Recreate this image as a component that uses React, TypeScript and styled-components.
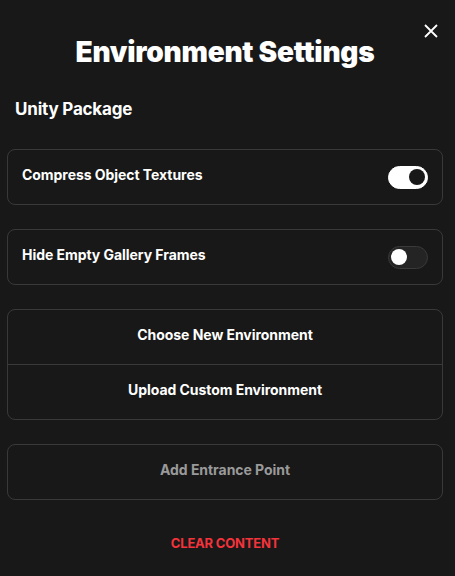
import { createGlobalStyle } from 'styled-components';
import styled from 'styled-components';

const GlobalStyle = createGlobalStyle`
  html, body {
    margin: 0;
    padding: 0;
    background: #181818;
  }

  body {
    font-family: Inter, "Noto Sans", sans-serif;
    color: #ffffff;
  }
`;

const Panel = styled.div`
  position: relative;
  width: 455px;
  min-height: 576px;
  box-sizing: border-box;
  padding: 35px 12px 0 7px;
  display: flex;
  flex-direction: column;
`;

const CloseButton = styled.button`
  position: absolute;
  top: 22px;
  right: 15px;
  width: 18px;
  height: 18px;
  padding: 0;
  border: none;
  background: transparent;
  display: flex;
  align-items: center;
  justify-content: center;
  cursor: pointer;
`;

const Title = styled.h1`
  margin: 0;
  text-align: center;
  font-size: 28px;
  line-height: 34px;
  font-weight: 900;
  letter-spacing: -0.25px;
`;

const SectionLabel = styled.h2`
  margin: 29px 0 29px 8px;
  font-size: 17px;
  line-height: 22px;
  font-weight: 700;
  letter-spacing: -0.2px;
`;

const Card = styled.div`
  border: 1px solid #393939;
  border-radius: 8px;
  display: flex;
  flex-direction: column;
  overflow: hidden;

  & + & {
    margin-top: 24px;
  }
`;

const Row = styled.div<{ $center?: boolean }>`
  height: 54px;
  box-sizing: border-box;
  padding: 0 14px;
  display: flex;
  align-items: center;
  justify-content: ${(p) => (p.$center ? 'center' : 'space-between')};

  & + & {
    border-top: 1px solid #393939;
    height: 55px;
  }
`;

const Label = styled.span<{ $muted?: boolean }>`
  font-size: 14px;
  font-weight: 700;
  letter-spacing: -0.05px;
  color: ${(p) => (p.$muted ? '#9a9a9a' : '#ffffff')};
  margin-top: -5px;
`;

const Track = styled.div<{ $on: boolean }>`
  width: 40px;
  height: 23px;
  box-sizing: border-box;
  border-radius: 12px;
  border: 1px solid ${(p) => (p.$on ? '#ffffff' : '#3a3a3a')};
  background: ${(p) => (p.$on ? '#ffffff' : '#242424')};
  display: flex;
  align-items: center;
  justify-content: ${(p) => (p.$on ? 'flex-end' : 'flex-start')};
  padding: 0 2px;
`;

const Knob = styled.div<{ $on: boolean }>`
  width: 16px;
  height: 16px;
  border-radius: 50%;
  background: ${(p) => (p.$on ? '#181818' : '#ffffff')};
`;

const ClearButton = styled.button`
  margin: 35px auto 0;
  padding: 0;
  border: none;
  background: transparent;
  color: #f5333b;
  font-family: Inter, "Noto Sans", sans-serif;
  font-size: 13px;
  line-height: 16px;
  font-weight: 700;
  letter-spacing: -0.2px;
  cursor: pointer;
`;

function Toggle({ on }: { on: boolean }) {
  return (
    <Track $on={on}>
      <Knob $on={on} />
    </Track>
  );
}

export default function App() {
  return (
    <>
      <GlobalStyle />
      <Panel>
        <CloseButton aria-label='Close'>
          <svg width='14' height='14' viewBox='0 0 14 14'>
            <path d='M1 1 L13 13 M13 1 L1 13' stroke='#ffffff' strokeWidth='1.8' />
          </svg>
        </CloseButton>

        <Title>Environment Settings</Title>
        <SectionLabel>Unity Package</SectionLabel>

        <Card>
          <Row>
            <Label>Compress Object Textures</Label>
            <Toggle on />
          </Row>
        </Card>
        <Card>
          <Row>
            <Label>Hide Empty Gallery Frames</Label>
            <Toggle on={false} />
          </Row>
        </Card>
        <Card>
          <Row $center>
            <Label>Choose New Environment</Label>
          </Row>
          <Row $center>
            <Label>Upload Custom Environment</Label>
          </Row>
        </Card>
        <Card>
          <Row $center>
            <Label $muted>Add Entrance Point</Label>
          </Row>
        </Card>

        <ClearButton>CLEAR CONTENT</ClearButton>
      </Panel>
    </>
  );
}
